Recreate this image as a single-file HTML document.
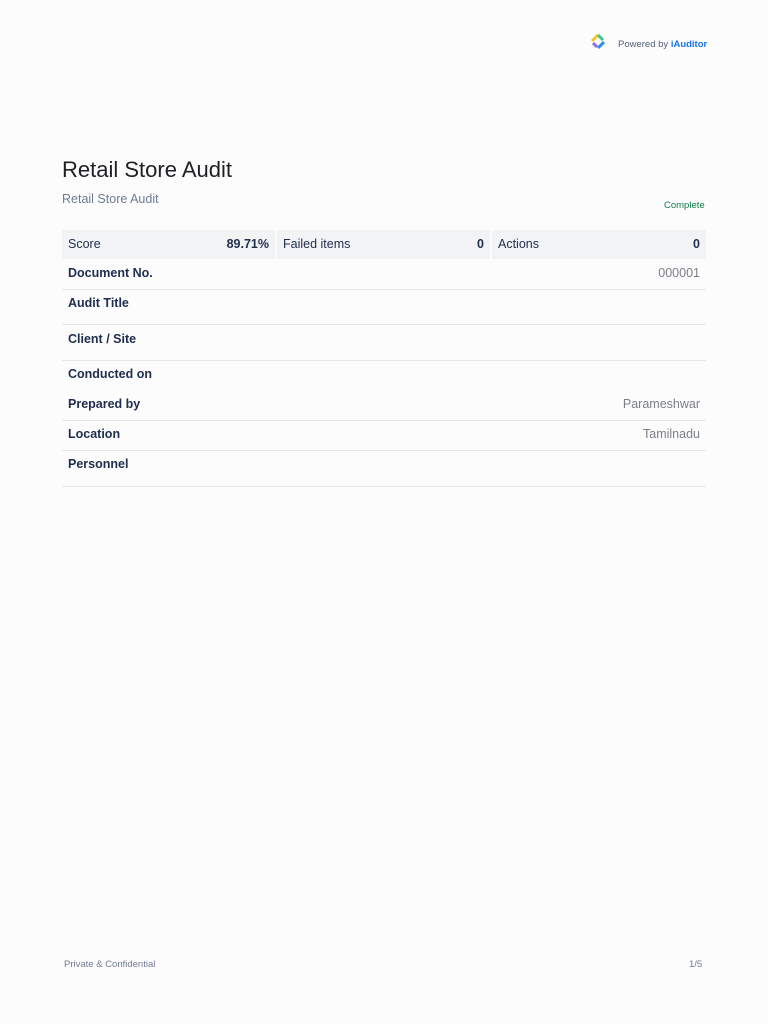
<!DOCTYPE html>
<html><head><meta charset="utf-8"><style>
*{margin:0;padding:0;box-sizing:border-box}
body{width:768px;height:1024px;background:#fcfcfc;font-family:"Liberation Sans",sans-serif;position:relative;overflow:hidden}
.abs{position:absolute}
.row{position:absolute;left:62px;width:644px;border-bottom:1px solid #e6e7e9;font-size:12.5px;color:#1f2d4e;font-weight:bold}
.row span{position:absolute;left:6px}
.row .v{left:auto;right:6px;font-weight:normal;color:#7b7f87}
</style></head><body>
<svg class="abs" style="left:590px;top:34px" width="16" height="16" viewBox="0 0 16 16">
<path d="M8 1 L2 7" stroke="#f7c52a" stroke-width="3" fill="none"/>
<path d="M8 1 L13 6" stroke="#3fc98b" stroke-width="3" fill="none"/>
<path d="M14 8 L8 14" stroke="#2a8de8" stroke-width="3" fill="none"/>
<path d="M3 9 L7 13" stroke="#8d6bea" stroke-width="3" fill="none"/>
</svg>
<div class="abs" style="left:618px;top:39px;font-size:9.5px;color:#545f7a">Powered by <b style="color:#1574e8">iAuditor</b></div>
<div class="abs" style="left:62px;top:157px;font-size:22px;color:#1f2024">Retail Store Audit</div>
<div class="abs" style="left:62px;top:192px;font-size:12.5px;color:#6f7a93">Retail Store Audit</div>
<div class="abs" style="left:664px;top:200px;font-size:9.5px;color:#13814a">Complete</div>
<div class="abs" style="left:62px;top:230px;width:644px;height:29px;font-size:12.5px;color:#1f2d4e">
<div class="abs" style="left:0;width:213px;height:29px;background:#f2f3f4"><span class="abs" style="left:6px;top:7px">Score</span><span class="abs" style="right:6px;top:7px;font-weight:bold">89.71%</span></div>
<div class="abs" style="left:215px;width:213px;height:29px;background:#f2f3f4"><span class="abs" style="left:6px;top:7px">Failed items</span><span class="abs" style="right:6px;top:7px;font-weight:bold">0</span></div>
<div class="abs" style="left:430px;width:214px;height:29px;background:#f2f3f4"><span class="abs" style="left:6px;top:7px">Actions</span><span class="abs" style="right:6px;top:7px;font-weight:bold">0</span></div>
</div>
<div class="row" style="top:259px;height:31px"><span style="top:7px">Document No.</span><span class="v" style="top:7px">000001</span></div>
<div class="row" style="top:290px;height:35px"><span style="top:6px">Audit Title</span></div>
<div class="row" style="top:325px;height:36px"><span style="top:7px">Client / Site</span></div>
<div class="row" style="top:361px;height:60px;"><span style="top:6px">Conducted on</span><span style="top:36px">Prepared by</span><span class="v" style="top:36px">Parameshwar</span></div>
<div class="row" style="top:421px;height:30px"><span style="top:6px">Location</span><span class="v" style="top:6px">Tamilnadu</span></div>
<div class="row" style="top:451px;height:36px"><span style="top:6px">Personnel</span></div>
<div class="abs" style="left:64px;top:959px;font-size:9.5px;color:#6f7a93">Private &amp; Confidential</div>
<div class="abs" style="left:689px;top:959px;font-size:9.5px;color:#6f7a93">1/5</div>
</body></html>
